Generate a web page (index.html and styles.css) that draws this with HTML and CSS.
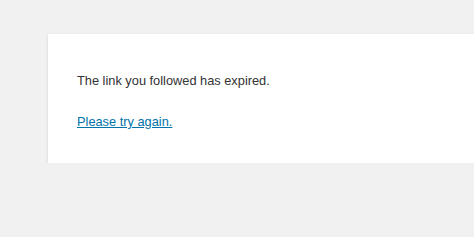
FILE: index.html
```html
<!DOCTYPE html>
<html lang="en">
<head>
<meta charset="utf-8">
<title>Something went wrong</title>
<link rel="stylesheet" href="styles.css">
</head>
<body class="page">
  <div class="card">
    <p class="message">The link you followed has expired.</p>
    <p class="message"><a class="retry" href="#">Please try again.</a></p>
  </div>
</body>
</html>
```
FILE: styles.css
```css
html {
  background: #f1f1f1;
}
.page {
  margin: 0;
  padding: 34px 0 0 48px;
  background: #f1f1f1;
  font-family: "Liberation Sans", Arial, sans-serif;
  color: #333;
  overflow: hidden;
}
.card {
  background: #fff;
  box-shadow: 0 1px 3px rgba(0, 0, 0, 0.13);
  padding: 37px 29px 31px;
  margin-right: -10px;
}
.message {
  margin: 0;
  font-size: 12.8px;
  line-height: 19.5px;
}
.message + .message {
  margin-top: 21.5px;
}
.retry {
  color: #0073aa;
  text-decoration: underline;
}
```
